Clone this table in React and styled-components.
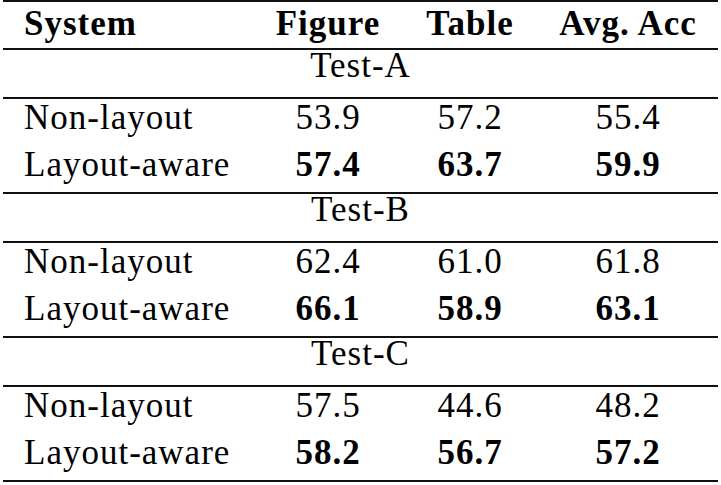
import React from "react";
import styled, { createGlobalStyle } from "styled-components";

const Global = createGlobalStyle`
  html, body { margin: 0; padding: 0; background: #ffffff; }
  body { font-family: "Liberation Serif", "Times New Roman", serif; color: #000; }
`;

const Table = styled.div`
  width: 715px;
  margin-left: 3px;
  border-top: 2px solid #111;
  font-family: "Liberation Serif", "Times New Roman", serif;
  font-size: 35px;
  letter-spacing: 1px;
  color: #000;
`;

const Grid = styled.div`
  display: grid;
  grid-template-columns: 251px 148px 136px 180px;
`;

const HeaderRow = styled(Grid)`
  line-height: 43px;
  padding-bottom: 3px;
  border-bottom: 2px solid #111;
`;

const DataRow = styled(Grid)`
  line-height: 37px;
  padding-bottom: ${(p) => (p.$last ? "9px" : "10px")};
`;

const Cell = styled.div`
  white-space: nowrap;
  text-align: ${(p) => (p.$first ? "left" : "center")};
  padding-left: ${(p) => (p.$first ? "21px" : "0")};
  font-weight: ${(p) => (p.$bold ? "bold" : "normal")};
`;

const GroupLabel = styled.div`
  text-align: center;
  line-height: 31px;
  padding-bottom: 16px;
  border-bottom: 2px solid #111;
`;

const Rows = styled.div`
  border-bottom: 2px solid #111;
`;

const groups = [
  {
    name: "Test-A",
    rows: [
      ["Non-layout", "53.9", "57.2", "55.4", false],
      ["Layout-aware", "57.4", "63.7", "59.9", true],
    ],
  },
  {
    name: "Test-B",
    rows: [
      ["Non-layout", "62.4", "61.0", "61.8", false],
      ["Layout-aware", "66.1", "58.9", "63.1", true],
    ],
  },
  {
    name: "Test-C",
    rows: [
      ["Non-layout", "57.5", "44.6", "48.2", false],
      ["Layout-aware", "58.2", "56.7", "57.2", true],
    ],
  },
];

export default function App() {
  return (
    <>
      <Global />
      <Table>
        <HeaderRow>
          <Cell $first $bold>System</Cell>
          <Cell $bold>Figure</Cell>
          <Cell $bold>Table</Cell>
          <Cell $bold>Avg. Acc</Cell>
        </HeaderRow>
        {groups.map((g) => (
          <div key={g.name}>
            <GroupLabel>{g.name}</GroupLabel>
            <Rows>
              {g.rows.map((r, i) => (
                <DataRow key={r[0]} $last={i === g.rows.length - 1}>
                  <Cell $first>{r[0]}</Cell>
                  <Cell $bold={r[4]}>{r[1]}</Cell>
                  <Cell $bold={r[4]}>{r[2]}</Cell>
                  <Cell $bold={r[4]}>{r[3]}</Cell>
                </DataRow>
              ))}
            </Rows>
          </div>
        ))}
      </Table>
    </>
  );
}
